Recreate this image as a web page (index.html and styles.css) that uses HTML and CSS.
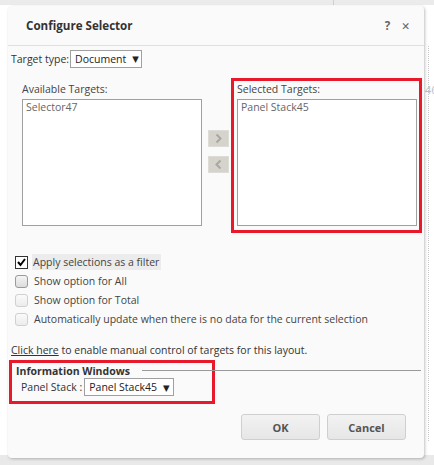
FILE: index.html
```html
<!DOCTYPE html>
<html>
<head>
<meta charset="utf-8">
<link rel="stylesheet" href="styles.css">
</head>
<body>
<div class="page">
  <div class="bg-top"><span class="bg-top-line"></span></div>
  <div class="bg-right-dots"></div>
  <div class="bg-num">46</div>
  <div class="bg-bottom"></div>
  <div class="dialog">
    <div class="titlebar">
      <div class="title">Configure Selector</div>
      <div class="tools">
        <span class="tool">?</span>
        <span class="tool close">✕</span>
      </div>
    </div>
    <div class="content">
      <div class="type-row">
        <span class="lbl">Target type:</span>
        <span class="select sel-doc">Document <span class="caret">▼</span></span>
      </div>
      <div class="targets">
        <div class="col col-avail">
          <div class="col-lbl">Available Targets:</div>
          <div class="listbox">Selector47</div>
        </div>
        <div class="arrows">
          <span class="abtn"><svg width="21" height="17" viewBox="0 0 21 17"><path d="M8.5 4.5 L12.5 8.5 L8.5 12.5" fill="none" stroke="#a9a7a2" stroke-width="2"/></svg></span>
          <span class="abtn"><svg width="21" height="17" viewBox="0 0 21 17"><path d="M12.5 4.5 L8.5 8.5 L12.5 12.5" fill="none" stroke="#a9a7a2" stroke-width="2"/></svg></span>
        </div>
        <div class="col col-sel">
          <div class="col-lbl">Selected Targets:</div>
          <div class="listbox">Panel Stack45</div>
        </div>
      </div>
      <div class="checks">
        <div class="chk-row"><span class="cb cb-on"><svg width="11" height="11" viewBox="0 0 11 11"><path d="M2 5 L4.5 8 L9 2" fill="none" stroke="#000" stroke-width="2"/></svg></span><span class="chk-lbl hl">Apply selections as a filter</span></div>
        <div class="chk-row"><span class="cb cb-dark"></span><span class="chk-lbl">Show option for All</span></div>
        <div class="chk-row"><span class="cb cb-light"></span><span class="chk-lbl">Show option for Total</span></div>
        <div class="chk-row"><span class="cb cb-light"></span><span class="chk-lbl">Automatically update when there is no data for the current selection</span></div>
      </div>
      <div class="manual"><span class="link">Click here</span> to enable manual control of targets for this layout.</div>
      <div class="info-wrap">
        <div class="info-box">
          <div class="info-head"><span class="info-title">Information Windows</span></div>
          <div class="info-row">
            <span class="lbl">Panel Stack :</span>
            <span class="select sel-ps">Panel Stack45 <span class="caret">▼</span></span>
          </div>
        </div>
        <div class="info-line"></div>
      </div>
      <div class="buttons">
        <span class="btn">OK</span>
        <span class="btn">Cancel</span>
      </div>
    </div>
  </div>
</div>
</body>
</html>
```
FILE: styles.css
```css
html, body {
  margin: 0;
  padding: 0;
  background: #ffffff;
}
body {
  font-family: "Open Sans", "DejaVu Sans", sans-serif;
  font-size: 10.5px;
  color: #444;
  white-space: nowrap;
}
.page {
  position: relative;
  width: 434px;
  height: 465px;
  overflow: hidden;
  padding: 6px 0 0 8px;
  box-sizing: border-box;
}
.bg-top {
  position: absolute;
  left: 0; top: 0;
  width: 434px; height: 5px;
  background: #ebebeb;
}
.bg-top-line {
  position: absolute;
  left: 333px; top: 0;
  width: 1px; height: 5px;
  background: #cfcfcf;
}
.bg-right-dots {
  position: absolute;
  left: 428px; top: 46px;
  width: 0; height: 395px;
  border-left: 1px dotted #c8c8c8;
}
.bg-num {
  position: absolute;
  left: 425px; top: 82px;
  color: #c0c0c0;
  font-size: 11px;
}
.bg-bottom {
  position: absolute;
  left: 0; top: 455px;
  width: 434px; height: 10px;
  background: #e9e9e9;
}
.dialog {
  position: relative;
  width: 416px;
  height: 452px;
  background: #fafafa;
  border-radius: 4px;
  box-shadow: 1px 1px 3px rgba(0,0,0,0.25);
  box-sizing: border-box;
}
.titlebar {
  height: 40px;
  border-bottom: 1px solid #e0e0e0;
  display: flex;
  align-items: center;
  justify-content: space-between;
  padding: 0 14px 0 18px;
  box-sizing: border-box;
}
.title {
  font-weight: bold;
  font-size: 11.6px;
  color: #333;
}
.tools {
  display: flex;
  gap: 11px;
  align-items: center;
}
.tool {
  font-weight: bold;
  color: #666;
  font-size: 11.5px;
}
.tool.close {
  font-size: 10.5px;
}
.content {
  padding: 3px 0 0 3px;
}
.type-row {
  display: flex;
  align-items: center;
  height: 19px;
}
.lbl {
  color: #333;
}
.select {
  display: inline-flex;
  align-items: center;
  height: 18px;
  border: 1px solid #a0a0a0;
  background: #fff;
  box-sizing: border-box;
  padding: 0 5px 0 4px;
  color: #222;
  margin-left: 1px;
}
.sel-doc { width: 72px; }
.sel-ps { width: 90px; margin-left: 2px; }
.caret {
  font-size: 8.5px;
  margin-left: auto;
  padding-left: 6px;
}
.targets {
  display: flex;
  margin-top: 10px;
  height: 155px;
}
.col-avail {
  padding: 3px 0 0 11px;
}
.col-lbl {
  height: 16px;
  line-height: 16px;
  color: #444;
  margin-bottom: 2px;
}
.listbox {
  width: 180px;
  height: 127px;
  border: 1px solid #a0a0a0;
  background: #fff;
  box-sizing: border-box;
  padding: 0 3px;
  color: #666;
  line-height: 14px;
}
.arrows {
  display: flex;
  flex-direction: column;
  gap: 9px;
  padding: 52px 0 0 6px;
}
.abtn {
  display: block;
  width: 21px;
  height: 17px;
  background: #d6d3cc;
  border: 1px solid #dedcd6;
  box-sizing: border-box;
}
.abtn svg { display: block; margin: -1px; }
.col-sel {
  margin-left: 2px;
  width: 191px;
  height: 155px;
  border: 3px solid #e8192b;
  box-sizing: border-box;
  padding: 0 0 0 3px;
}
.col-sel .listbox { width: 180px; }
.checks {
  margin-top: 20px;
  padding-left: 4px;
  display: flex;
  flex-direction: column;
}
.chk-row {
  display: flex;
  align-items: center;
  height: 18px;
}
.chk-row + .chk-row { margin-top: 1px; }
.cb {
  width: 13px;
  height: 13px;
  box-sizing: border-box;
  flex: none;
}
.cb-on {
  border: 1px solid #333;
  background: #fff;
  display: flex;
  align-items: center;
  justify-content: center;
}
.cb-on svg { display: block; }
.cb-dark {
  border: 1px solid #9a9a9a;
  border-radius: 3px;
  background: linear-gradient(#f4f4f4, #dcdcdc);
}
.cb-light {
  border: 1px solid #d0d0d0;
  border-radius: 3px;
  background: linear-gradient(#fafafa, #ececec);
}
.chk-lbl {
  margin-left: 6px;
  color: #444;
  line-height: 16px;
}
.hl {
  background: #ececec;
  margin-left: 4px;
  padding: 0 2px 0 1px;
}
.manual {
  margin-top: 14px;
  line-height: 16px;
  color: #333;
}
.link {
  text-decoration: underline;
}
.info-wrap {
  position: relative;
  margin-top: 2px;
}
.info-box {
  width: 206px;
  height: 44px;
  border: 3px solid #e8192b;
  box-sizing: border-box;
  margin-left: -2px;
  padding: 0 0 0 4px;
}
.info-head {
  height: 15px;
  line-height: 16px;
}
.info-title {
  font-weight: bold;
  color: #333;
}
.info-row {
  display: flex;
  align-items: center;
  padding-left: 5px;
}
.info-line {
  position: absolute;
  left: 131px;
  top: 10px;
  width: 279px;
  height: 1px;
  background: #999;
}
.buttons {
  display: flex;
  justify-content: flex-end;
  gap: 7px;
  padding-right: 18px;
  margin-top: 10px;
}
.btn {
  display: flex;
  align-items: center;
  justify-content: center;
  width: 79px;
  height: 26px;
  box-sizing: border-box;
  border: 1px solid #cfcfcf;
  border-radius: 3px;
  background: linear-gradient(#f2f2f2, #e6e6e6);
  font-weight: bold;
  color: #555;
  font-size: 11px;
}
```
